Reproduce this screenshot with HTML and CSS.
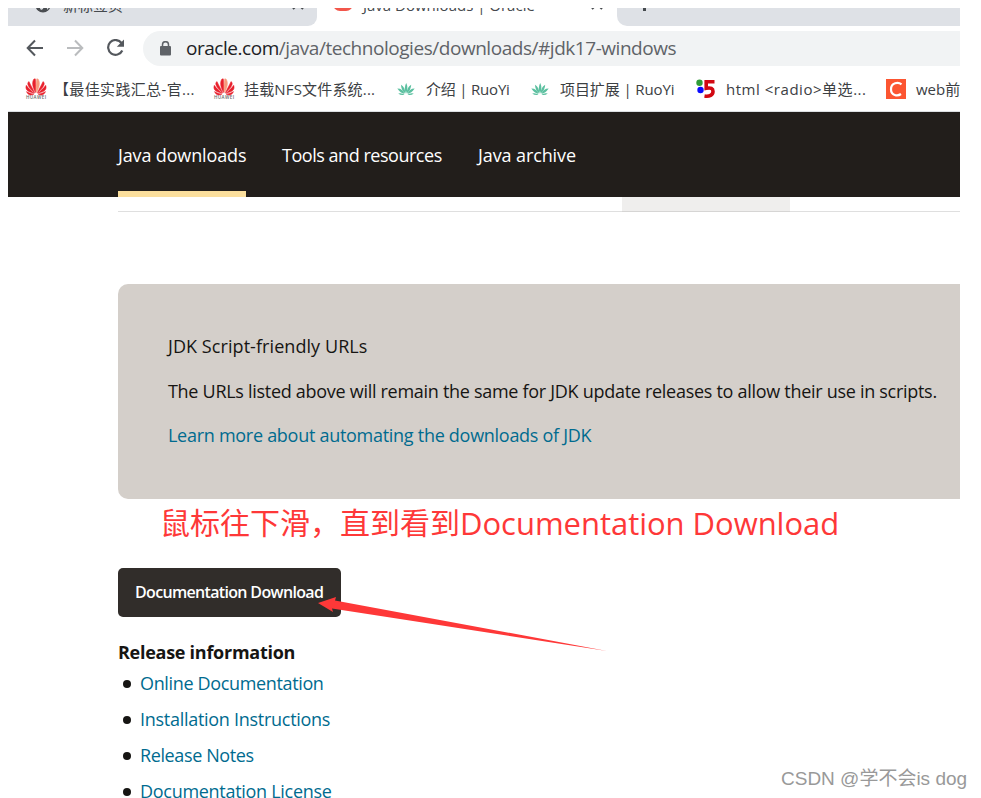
FILE: index.html
```
<!DOCTYPE html>
<html lang="zh-CN">
  <head>
    <meta charset="UTF-8" />
    <meta name="viewport" content="width=device-width, initial-scale=1.0" />
    <title>Java Downloads | Oracle</title>
    <link rel="stylesheet" href="styles.css">
  </head>
  <body>

    <!-- shared bookmark icons -->
    <svg class="defs" width="0" height="0">
      <symbol id="huawei" viewBox="0 0 22 22">
        <g fill="#e8202c" stroke="#e8202c" stroke-width=".5">
          <path d="M10.600 14.500C8 10.500 6.500 5 8.600 1.500c.5-.7 1.300-.7 1.700-.6.7 4 .7 9 .3 13.600z"/>
          <path d="M9.800 14.700C7.500 10.500 5.500 7 4 3.500 1.500 5 2.500 9 9.800 14.700z"/>
          <path d="M9.300 15.200C6.500 13 3.500 10.500 1.300 7.300.2 10.500 1 13.800 9.300 15.200z"/>
          <path d="M9 16C6 16 4 15 1.500 13.600 2.800 17 5.500 18 9 16z"/>
          <path d="M12.200 14.700c2.300-4.200 4.300-7.700 5.800-11.200 2.500 1.500 1.500 5.500-5.800 11.200z"/>
          <path d="M12.700 15.200c2.800-2.200 5.800-4.700 8-7.900 1.100 3.200.3 6.500-8 7.900z"/>
          <path d="M13 16c3 0 5-1 7.500-2.400-1.300 3.400-4 4.400-7.500 2.400z"/>
        </g>
        <path fill="#f79a7c" stroke="#f79a7c" stroke-width=".5" d="M11.400 14.500C14 10.500 15.500 5 13.400 1.500c-.5-.7-1.300-.7-1.700-.6-.7 4-.7 9-.3 13.600z"/>
        <text x="1" y="21" font-size="4.500" textLength="20" fill="#666" class="huawei-name">HUAWEI</text>
      </symbol>
      <symbol id="ruoyi" viewBox="0 0 18 14">
        <g fill="#5cc0a0">
          <path d="M9 11.500Q6.500 5.500 9.300 1q2.200 5-.3 10.500z"/>
          <path d="M8.300 11.500Q4 8 4 2.800q4.300 2.700 4.300 8.700z"/>
          <path d="M9.700 11.500q4.300-3.500 4.500-8.700-4.500 2.700-4.500 8.700z"/>
          <path d="M7.500 12Q3.500 11 .3 6.500 6 6.500 7.500 12z"/>
          <path d="M10.500 12q4-1 7.200-5.500-5.700 0-7.200 5.500z"/>
          <path d="M7.500 12.800q-3.500 1-6.300-1.300 3.500-1 6.300 1.300z"/>
          <path d="M10.500 12.800q3.500 1 6.300-1.300-3.500-1-6.300 1.300z"/>
        </g>
      </symbol>
    </svg>

    <div class="shot">

      <div class="tabs">
        <div class="tab first">
          <svg class="globe" width="16" height="16" viewBox="0 0 16 16"><circle cx="8" cy="8" r="7.600" fill="#4a4d51"/><path d="M3 8l6 0-1 4-2 1zM11 10l3-3-1 6z" fill="#dee1e6"/></svg>
          <span>新标签页</span>
          <svg class="close" width="12" height="12" viewBox="0 0 12 12"><path d="M1 1l10 10M11 1L1 11" stroke="#45494d" stroke-width="2"/></svg>
        </div>
        <div class="tab active">
          <i class="oracle"></i>
          <span>Java Downloads | Oracle</span>
          <svg class="close" width="12" height="12" viewBox="0 0 12 12"><path d="M1 1l10 10M11 1L1 11" stroke="#45494d" stroke-width="2"/></svg>
        </div>
        <div class="tab rest"><i class="plus"></i></div>
      </div>

      <div class="toolbar">
        <svg width="18" height="18" viewBox="0 0 18 18" fill="none" stroke="#54585d" stroke-width="2"><path d="M17 9H2M9 1.500L1.700 9 9 16.500"/></svg>
        <svg width="18" height="18" viewBox="0 0 18 18" fill="none" stroke="#babcbe" stroke-width="2"><path d="M1 9h15M9 1.500L16.300 9 9 16.500"/></svg>
        <svg width="19" height="18" viewBox="0 0 19 18"><path d="M15.500 4A7.400 7.400 0 1 0 16.300 11.500" fill="none" stroke="#54585d" stroke-width="2.200"/><path d="M18 .5v7.200h-7.200z" fill="#54585d"/></svg>
        <div class="address">
          <svg width="11" height="15" viewBox="0 0 11 15"><rect y="5" width="11" height="9.500" rx="1" fill="#5f6368"/><path d="M2.500 6V3.700a3 3 0 0 1 6 0V6" fill="none" stroke="#5f6368" stroke-width="1.500"/></svg>
          <p class="url"><b>oracle.com</b>/java/technologies/downloads/#jdk17-windows</p>
        </div>
      </div>

      <div class="bookmarks">
        <a class="b1"><svg width="22" height="22"><use href="#huawei"/></svg><span>【最佳实践汇总-官...</span></a>
        <a class="b2"><svg width="22" height="22"><use href="#huawei"/></svg><span>挂载NFS文件系统...</span></a>
        <a class="b3"><svg width="18" height="14"><use href="#ruoyi"/></svg><span>介绍 | RuoYi</span></a>
        <a class="b4"><svg width="18" height="14"><use href="#ruoyi"/></svg><span>项目扩展 | RuoYi</span></a>
        <a class="b5"><svg width="20" height="20" viewBox="0 0 20 20"><circle cx="3.500" cy="3.800" r="3.200" fill="#2f9b37"/><circle cx="4.500" cy="11" r="3.200" fill="#0a0aff"/><path d="M18.500 2.700H10.200V9.300C15 8.300 17 9.500 17 12.500c0 3.500-3.500 5.300-8.500 4.500" fill="none" stroke="#d20812" stroke-width="3.600"/></svg><span>html &lt;radio&gt;单选...</span></a>
        <a class="b6"><svg width="20" height="20" viewBox="0 0 20 20"><rect width="20" height="20" fill="#fc5531"/><path d="M15.500 5.300C12.500 2.800 5 3.200 5 10.300c0 6.200 6.500 7.300 10 4.700" fill="none" stroke="#fff" stroke-width="2.200"/></svg><span>web前</span></a>
      </div>

      <nav>
        <a class="current">Java downloads</a>
        <a class="n2">Tools and resources</a>
        <a class="n3">Java archive</a>
      </nav>

      <main>
        <div class="platforms"><div class="platform"></div></div>

        <div class="urls">
          <p class="u1">JDK Script-friendly URLs</p>
          <p class="u2">The URLs listed above will remain the same for JDK update releases to allow their use in scripts.</p>
          <p class="u3"><a>Learn more about automating the downloads of JDK</a></p>
        </div>

        <p class="note"><span class="zh">鼠标往下滑，直到看到</span><span class="en">Documentation Download</span></p>

        <button>Documentation Download</button>

        <h4>Release information</h4>
        <ul>
          <li><a class="l1">Online Documentation</a></li>
          <li><a class="l2">Installation Instructions</a></li>
          <li><a class="l3">Release Notes</a></li>
          <li><a class="l4">Documentation License</a></li>
        </ul>
      </main>
    </div>

    <svg class="arrow" width="290" height="56" viewBox="0 0 290 56"><path d="M0 6L18 0 17 3.500 289 54 14 11.500 15 15z" fill="#fe3838"/></svg>
    <p class="watermark">CSDN @学不会is dog</p>

  </body>
</html>
```

FILE: styles.css
```
* { box-sizing: border-box; }
html { overflow: hidden; }
body { margin: 0; background: white; color: #161513; height: 798px; overflow: hidden; font-family: 'Open Sans', 'Noto Sans CJK SC', sans-serif; }
p, h4, ul { margin: 0; padding: 0; }
svg { display: block; flex: none; }
.defs { position: absolute; }

.shot { width: 952px; height: 790px; margin: 8px 0 0 8px; overflow: hidden; }

/* browser */
.tabs { display: flex; height: 18px; overflow: hidden; background: white; font-size: 15px; color: #45494d; }
.tab { display: flex; align-items: flex-start; height: 18px; overflow: hidden; white-space: nowrap; }
.tab span { line-height: 20px; margin-top: -13px; flex: 1; }
.tab .close { margin: -10px 13px 0 0; }
.first { width: 309px; background: #dee1e6; border-radius: 0 0 9px 0; padding-left: 27px; }
.first .globe { margin: -11px 12px 0 0; }
.active { width: 300px; padding-left: 16px; }
.active .close { margin-right: 14px; }
.oracle { width: 20px; height: 14px; margin: -11px 10px 0 0; border-radius: 7px; border: 4px solid #f2564b; }
.rest { flex: 1; background: #dee1e6; border-radius: 0 0 0 10px; }
.plus { width: 3px; height: 3px; margin-left: 26px; background: #45494d; }

.toolbar { display: flex; align-items: center; height: 45px; padding-left: 18px; gap: 22px; }
.toolbar > svg { margin-bottom: 2px; }
.address { flex: 1; display: flex; align-items: center; height: 35px; margin: 0 0 1px -4px; padding-left: 17px; gap: 15px; background: #f1f3f4; border-radius: 18px 0 0 18px; }
.url { font-size: 19px; letter-spacing: -.46px; color: #5f6368; white-space: nowrap; }
.url b { font-weight: 400; color: #202124; }

.bookmarks { display: grid; grid-template-columns: 188px 184px 134px 165px 190px 1fr; height: 41px; padding-left: 17px; border-bottom: 1px solid #dcdfe2; font-size: 15px; color: #3c4043; }
.bookmarks a { display: flex; align-items: center; white-space: nowrap; height: 36px; }
.bookmarks span { margin: -2px 0 0 9px; }
.bookmarks .b1 span { margin-left: 7px; letter-spacing: .35px; }
.bookmarks .b2 span { letter-spacing: .17px; }
.bookmarks .b3 span { margin-left: 11px; letter-spacing: -.2px; }
.bookmarks .b4 span { margin-left: 11px; letter-spacing: -.1px; }
.bookmarks .b5 span { margin-left: 10px; letter-spacing: .53px; }
.bookmarks .b6 span { margin-left: 10px; }
.huawei-name { font-weight: 600; }

/* page */
nav { display: flex; gap: 36px; height: 85px; padding-left: 110px; background: #221e1b; color: white; font-size: 18px; }
nav a { height: 85px; line-height: 86px; white-space: nowrap; }
.current { width: 128px; letter-spacing: -.14px; border-bottom: 6px solid #fbdf9d; }
.n2 { width: 160px; letter-spacing: -.47px; }
.n3 { letter-spacing: -.1px; }

main { padding-left: 110px; }
.platforms { height: 15px; border-bottom: 1px solid #dfdfdf; }
.platform { width: 168px; height: 15px; margin-left: 504px; background: #efeeed; border-bottom: 1px solid #d6d5d4; }

.urls { height: 215px; margin-top: 72px; padding: 49px 0 0 50px; background: #d4cfca; border-radius: 10px 0 0 10px; font-size: 18px; line-height: 26px; white-space: nowrap; }
.urls p { margin-bottom: 18.5px; }
.u1 { letter-spacing: .07px; }
.u2 { letter-spacing: -.29px; }
.u3 { letter-spacing: -.28px; }
.urls a, li a { color: #006b8f; }

.note { display: flex; height: 69px; padding-left: 42px; font-size: 30px; line-height: 48px; color: #fe3838; white-space: nowrap; }
.en { font-size: 31px; letter-spacing: -.03px; }

button { display: block; width: 223px; height: 49px; border: none; border-radius: 5px; padding: 0 0 2px 17px; background: #312d2a; color: white; font: 600 16px 'Open Sans', sans-serif; letter-spacing: -.67px; text-align: left; white-space: nowrap; }

h4 { margin-top: 22px; font-size: 18px; line-height: 26px; font-weight: 700; letter-spacing: -.27px; }
ul { list-style: none; font-size: 18px; }
li { display: flex; align-items: center; height: 36px; }
li::before { content: ''; width: 8px; height: 8px; margin: 1px 9px 0 5px; border-radius: 50%; background: #161513; }
.l1 { letter-spacing: -.35px; }
.l2 { letter-spacing: -.28px; }
.l3 { letter-spacing: -.38px; }
.l4 { letter-spacing: -.29px; }

.arrow { position: absolute; left: 318px; top: 597px; }
.watermark { position: absolute; left: 781px; top: 765px; font: 19px/28px 'Liberation Sans', 'Noto Sans CJK SC', sans-serif; color: #999; white-space: nowrap; }
```
